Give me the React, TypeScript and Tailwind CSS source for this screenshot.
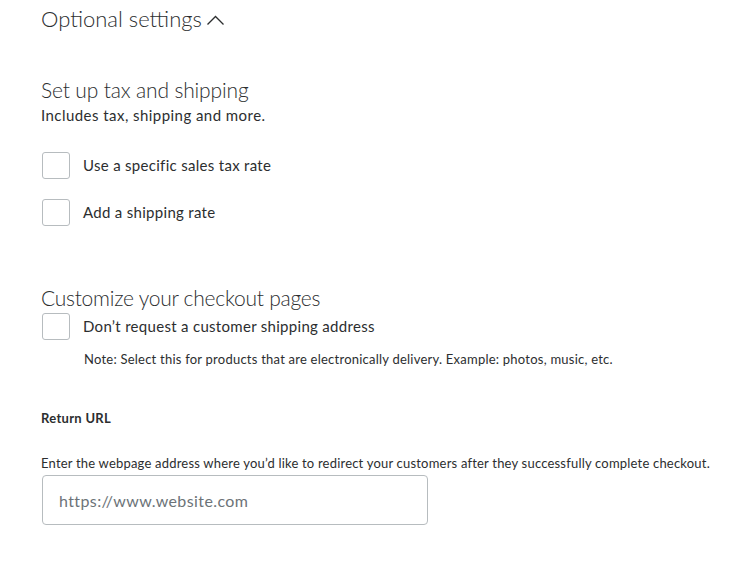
import React from 'react';

const Checkbox: React.FC<{ label: string }> = ({ label }) => (
  <label className="flex items-center gap-[13px]">
    <span className="ml-[1px] block w-[28px] h-[27px] rounded-[3px] border border-[#b7bcbf] bg-white" />
    <span className="text-[15px] text-[#2c2e2f] tracking-[0.3px]">{label}</span>
  </label>
);

export default function App() {
  return (
    <div className="min-h-[566px] w-[750px] bg-white px-[41px] pt-[4px] font-['Lato','Noto_Sans',sans-serif] text-[#2c2e2f]">
      <div className="flex items-center gap-[4px]">
        <h2 className="text-[22px] font-light leading-[30px]">Optional settings</h2>
        <svg width="19" height="12" viewBox="0 0 19 12" fill="none" className="mt-[1px]">
          <path d="M1.5 10.5 L9.5 2.5 L17.5 10.5" stroke="#2c2e2f" strokeWidth="1.3" />
        </svg>
      </div>

      <h3 className="mt-[42px] text-[21px] font-light leading-[28px] tracking-[-0.15px]">Set up tax and shipping</h3>
      <p className="text-[15px] leading-[22px] tracking-[0.45px]">Includes tax, shipping and more.</p>

      <div className="mt-[26px] flex flex-col gap-[20px]">
        <Checkbox label="Use a specific sales tax rate" />
        <Checkbox label="Add a shipping rate" />
      </div>

      <h3 className="mt-[58px] text-[21px] font-light leading-[28px] tracking-[-0.25px]">Customize your checkout pages</h3>
      <div className="mt-[1px]">
        <Checkbox label="Don’t request a customer shipping address" />
      </div>
      <p className="mt-[11px] ml-[43px] text-[13px] leading-[16px] tracking-[0.23px]">
        Note: Select this for products that are electronically delivery. Example: photos, music, etc.
      </p>

      <p className="mt-[42px] text-[13px] font-bold leading-[18px] tracking-[0.3px]">Return URL</p>
      <p className="mt-[27px] whitespace-nowrap text-[13px] leading-[18px] tracking-[0.2px]">
        Enter the webpage address where you’d like to redirect your customers after they successfully complete checkout.
      </p>
      <input
        type="text"
        placeholder="https://www.website.com"
        className="mt-[3px] ml-[1px] block h-[50px] w-[386px] rounded-[4px] border border-[#b7bcbf] px-[16px] text-[16px] tracking-[0.4px] text-[#2c2e2f] placeholder:text-[#6c7378] outline-none"
      />
    </div>
  );
}
